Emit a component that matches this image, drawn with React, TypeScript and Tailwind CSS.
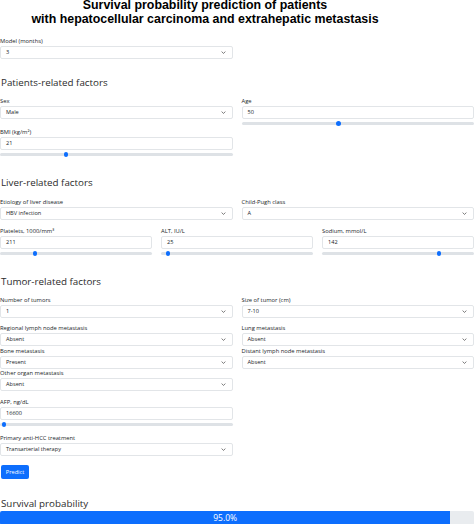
import React from "react";

type FieldProps = {
  label: string;
  value: string;
  select?: boolean;
  thumb?: number;
  gap?: string;
};

function Chevron() {
  return (
    <svg width="5" height="3" viewBox="0 0 5 3" className="shrink-0">
      <path d="M0.6 0.6 L2.5 2.4 L4.4 0.6" fill="none" stroke="#444" strokeWidth="0.7" />
    </svg>
  );
}

function Slider({ left }: { left: number }) {
  return (
    <div className="relative flex h-[9px] items-center">
      <div className="h-[2.5px] w-full rounded-full bg-[#dee2e6]" />
      <div
        className="absolute top-[2.25px] h-[4.5px] w-[4.5px] rounded-full bg-[#0d6efd]"
        style={{ left }}
      />
    </div>
  );
}

function Field({ label, value, select, thumb, gap = "mt-px" }: FieldProps) {
  return (
    <div>
      <div className="text-[5.8px] leading-[8px] text-[#212529]">{label}</div>
      <div
        className={`${gap} flex h-[13px] items-center justify-between rounded-[2px] border border-[#e2e5e8] bg-white pl-[5px] pr-[6px] text-[5.6px] text-[#212529]`}
      >
        <span>{value}</span>
        {select && <Chevron />}
      </div>
      {thumb !== undefined && <Slider left={thumb} />}
    </div>
  );
}

function Heading({ children, className }: { children: React.ReactNode; className: string }) {
  return <h4 className={`${className} pl-[1px] text-[9.8px] leading-[14px] text-[#2b2b2b]`}>{children}</h4>;
}

export default function App() {
  return (
    <div className="h-[524px] w-[474px] overflow-hidden bg-white font-['Open_Sans',sans-serif]">
      <h1 className="mt-[-2px] w-[410px] text-center font-['Liberation_Sans',Arial,sans-serif] text-[12.4px] font-bold leading-[14px] text-black">
        Survival probability prediction of patients
        <br />
        with hepatocellular carcinoma and extrahepatic metastasis
      </h1>

      <div className="mt-[11px] w-[232.5px]">
        <Field label="Model (months)" value="3" select />
      </div>

      <Heading className="mt-[17px]">Patients-related factors</Heading>
      <div className="mt-[7px] grid grid-cols-2 gap-x-[9px]">
        <Field label="Sex" value="Male" select />
        <Field label="Age" value="50" thumb={94.5} />
        <Field label="BMI (kg/m²)" value="21" thumb={63.75} />
      </div>

      <Heading className="mt-[17px]">Liver-related factors</Heading>
      <div className="mt-[8px] grid grid-cols-2 gap-x-[9px]">
        <Field label="Etiology of liver disease" value="HBV infection" select />
        <Field label="Child-Pugh class" value="A" select />
      </div>
      <div className="mt-[7px] grid grid-cols-3 gap-x-[9px]">
        <Field label="Platelets, 1000/mm³" value="211" thumb={32.5} />
        <Field label="ALT, IU/L" value="25" thumb={4.5} />
        <Field label="Sodium, mmol/L" value="142" thumb={114.5} />
      </div>

      <Heading className="mt-[17px]">Tumor-related factors</Heading>
      <div className="mt-[7px] grid grid-cols-2 gap-x-[9px]">
        <Field label="Number of tumors" value="1" select />
        <Field label="Size of tumor (cm)" value="7-10" select />
      </div>
      <div className="mt-[6px] grid grid-cols-2 gap-x-[9px]">
        <Field label="Regional lymph node metastasis" value="Absent" select />
        <Field label="Lung metastasis" value="Absent" select />
      </div>
      <div className="mt-[1px] grid grid-cols-2 gap-x-[9px]">
        <Field label="Bone metastasis" value="Present" select />
        <Field label="Distant lymph node metastasis" value="Absent" select />
      </div>
      <div className="w-[232.5px]">
        <Field label="Other organ metastasis" value="Absent" select />
      </div>
      <div className="mt-[7px] w-[232.5px]">
        <Field label="AFP, ng/dL" value="16600" thumb={1.75} />
      </div>
      <div className="mt-[5px] w-[232.5px]">
        <Field label="Primary anti-HCC treatment" value="Transarterial therapy" select />
      </div>

      <button className="mt-[9px] ml-[1px] flex h-[13.5px] w-[28px] items-center justify-center rounded-[2px] bg-[#0d6efd] text-[5.6px] text-white">
        Predict
      </button>

      <Heading className="mt-[18px]">Survival probability</Heading>
      <div className="mt-[0.5px] flex h-[14px] w-full overflow-hidden rounded-[2px] bg-[#e9ecef]">
        <div className="flex h-full w-[95%] items-center justify-center bg-[#0d6efd] text-[8.5px] text-white">
          95.0%
        </div>
      </div>
    </div>
  );
}
